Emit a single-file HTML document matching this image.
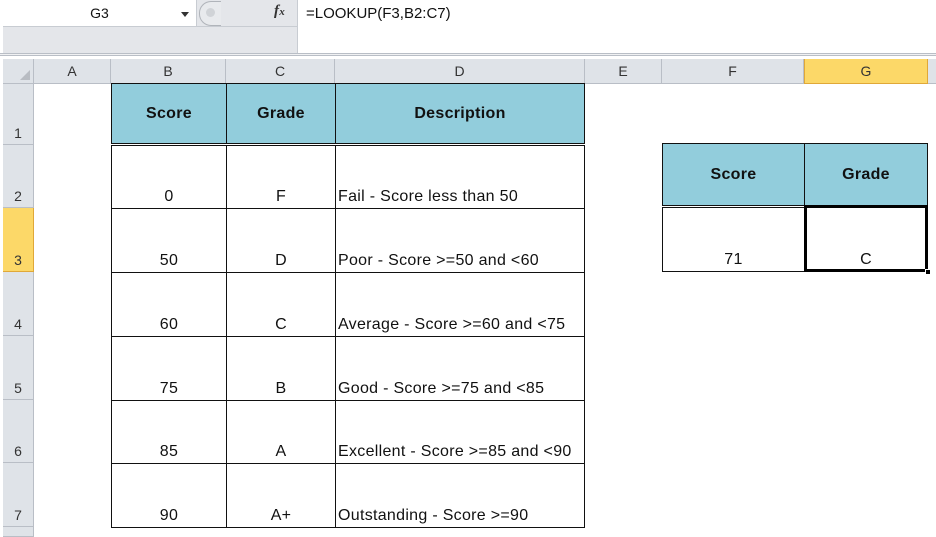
<!DOCTYPE html>
<html><head><meta charset="utf-8"><style>
*{margin:0;padding:0;box-sizing:border-box}
body{width:936px;height:535px;overflow:hidden;background:#fff;font-family:"Liberation Sans",sans-serif;font-size:16px;letter-spacing:0.3px;color:#111;position:relative}
.a{position:absolute}
.ch{position:absolute;top:59px;height:25px;background:#dfe3e8;border-right:1px solid #b9bec6;border-bottom:1px solid #b9bec6;text-align:center;line-height:24px;font-size:14px;letter-spacing:0;color:#333}
.rh{position:absolute;left:3px;width:31px;background:#dfe3e8;border-bottom:1px solid #b9bec6;border-right:1px solid #b9bec6;font-size:14px;letter-spacing:0;color:#333;text-align:center}
.rh span{position:absolute;bottom:3px;left:0;right:0}
.c{position:absolute;border:1px solid #111;text-align:center}
.c span{position:absolute;bottom:2px;left:0;right:0;white-space:nowrap}
.h{background:#92cddc;font-weight:bold;display:flex;align-items:center;justify-content:center}
.l span{text-align:left;left:2px}
</style></head><body>
<div class="a" style="left:0;top:0;width:936px;height:58px;background:#fff"></div>
<div class="a" style="left:3px;top:0;width:194px;height:27px;background:#fff;border-right:1px solid #c8ccd2;border-bottom:1px solid #c8ccd2;text-align:center;line-height:27px;font-size:14px;letter-spacing:0">G3</div>
<div class="a" style="left:181px;top:12px;width:0;height:0;border-left:4px solid transparent;border-right:4px solid transparent;border-top:5px solid #333"></div>
<div class="a" style="left:197px;top:0;width:101px;height:27px;background:#e4e6ea;border-bottom:1px solid #c8ccd2"></div>
<div class="a" style="left:199px;top:1px;width:22px;height:25px;border-radius:12px 0 0 12px;border:1px solid #b0b4ba;border-right:none;background:#e8eaed"></div>
<div class="a" style="left:206px;top:8px;width:9px;height:9px;border-radius:50%;background:#d0d3d7"></div>
<div class="a" style="left:274px;top:3px;font-family:'Liberation Serif',serif;font-style:italic;font-weight:bold;font-size:15px;color:#333">f<span style="font-size:11px">x</span></div>
<div class="a" style="left:3px;top:27px;width:295px;height:26px;background:#e4e6ea;border-right:1px solid #c8ccd2"></div>
<div class="a" style="left:297px;top:0;width:1px;height:53px;background:#c8ccd2"></div>
<div class="a" style="left:306px;top:5px;font-size:15px;letter-spacing:0">=LOOKUP(F3,B2:C7)</div>
<div class="a" style="left:0;top:53px;width:936px;height:3px;background:#f0f1f3;border-top:1px solid #b9bec6;border-bottom:1px solid #b9bec6"></div>
<div class="ch" style="left:3px;width:31px"><div class="a" style="right:3px;bottom:3px;width:0;height:0;border-left:10px solid transparent;border-bottom:10px solid #b8bcc2"></div></div>
<div class="ch" style="left:34px;width:77px">A</div>
<div class="ch" style="left:111px;width:115px">B</div>
<div class="ch" style="left:226px;width:109px">C</div>
<div class="ch" style="left:335px;width:250px">D</div>
<div class="ch" style="left:585px;width:77px">E</div>
<div class="ch" style="left:662px;width:142px">F</div>
<div class="ch" style="left:804px;width:124px;background:#fcd868;border:1px solid #e0a838;border-top:none">G</div>
<div class="ch" style="left:928px;width:10px"></div>
<div class="rh" style="top:84px;height:61px"><span>1</span></div>
<div class="rh" style="top:145px;height:63px"><span>2</span></div>
<div class="rh" style="top:208px;height:64px;background:#fcd868;border-color:#e0a838"><span>3</span></div>
<div class="rh" style="top:272px;height:64px"><span>4</span></div>
<div class="rh" style="top:336px;height:64px"><span>5</span></div>
<div class="rh" style="top:400px;height:63px"><span>6</span></div>
<div class="rh" style="top:463px;height:64px"><span>7</span></div>
<div class="rh" style="top:527px;height:10px"></div>
<div class="c h" style="left:111px;top:83px;width:116px;height:61px">Score</div>
<div class="c h" style="left:226px;top:83px;width:110px;height:61px">Grade</div>
<div class="c h" style="left:335px;top:83px;width:250px;height:61px">Description</div>
<div class="a" style="left:111px;top:143px;width:474px;height:3px;border-bottom:1px solid #111"></div>
<div class="c" style="left:111px;top:145px;width:116px;height:64px"><span>0</span></div>
<div class="c" style="left:226px;top:145px;width:110px;height:64px"><span>F</span></div>
<div class="c l" style="left:335px;top:145px;width:250px;height:64px"><span>Fail - Score less than 50</span></div>
<div class="c" style="left:111px;top:208px;width:116px;height:65px"><span>50</span></div>
<div class="c" style="left:226px;top:208px;width:110px;height:65px"><span>D</span></div>
<div class="c l" style="left:335px;top:208px;width:250px;height:65px"><span>Poor - Score &gt;=50 and &lt;60</span></div>
<div class="c" style="left:111px;top:272px;width:116px;height:65px"><span>60</span></div>
<div class="c" style="left:226px;top:272px;width:110px;height:65px"><span>C</span></div>
<div class="c l" style="left:335px;top:272px;width:250px;height:65px"><span>Average - Score &gt;=60 and &lt;75</span></div>
<div class="c" style="left:111px;top:336px;width:116px;height:65px"><span>75</span></div>
<div class="c" style="left:226px;top:336px;width:110px;height:65px"><span>B</span></div>
<div class="c l" style="left:335px;top:336px;width:250px;height:65px"><span>Good - Score &gt;=75 and &lt;85</span></div>
<div class="c" style="left:111px;top:400px;width:116px;height:64px"><span>85</span></div>
<div class="c" style="left:226px;top:400px;width:110px;height:64px"><span>A</span></div>
<div class="c l" style="left:335px;top:400px;width:250px;height:64px"><span>Excellent - Score &gt;=85 and &lt;90</span></div>
<div class="c" style="left:111px;top:463px;width:116px;height:65px"><span>90</span></div>
<div class="c" style="left:226px;top:463px;width:110px;height:65px"><span>A+</span></div>
<div class="c l" style="left:335px;top:463px;width:250px;height:65px"><span>Outstanding - Score &gt;=90</span></div>
<div class="c h" style="left:662px;top:143px;width:143px;height:63px">Score</div>
<div class="c h" style="left:804px;top:143px;width:124px;height:63px">Grade</div>
<div class="a" style="left:662px;top:205px;width:142px;height:3px;border-bottom:1px solid #111"></div>
<div class="c" style="left:662px;top:207px;width:143px;height:65px"><span>71</span></div>
<div class="c" style="left:804px;top:205px;width:124px;height:67px;border:3px solid #000"><span style="bottom:0">C</span></div>
<div class="a" style="left:925px;top:269px;width:6px;height:6px;background:#000;border:1px solid #fff"></div>
</body></html>
